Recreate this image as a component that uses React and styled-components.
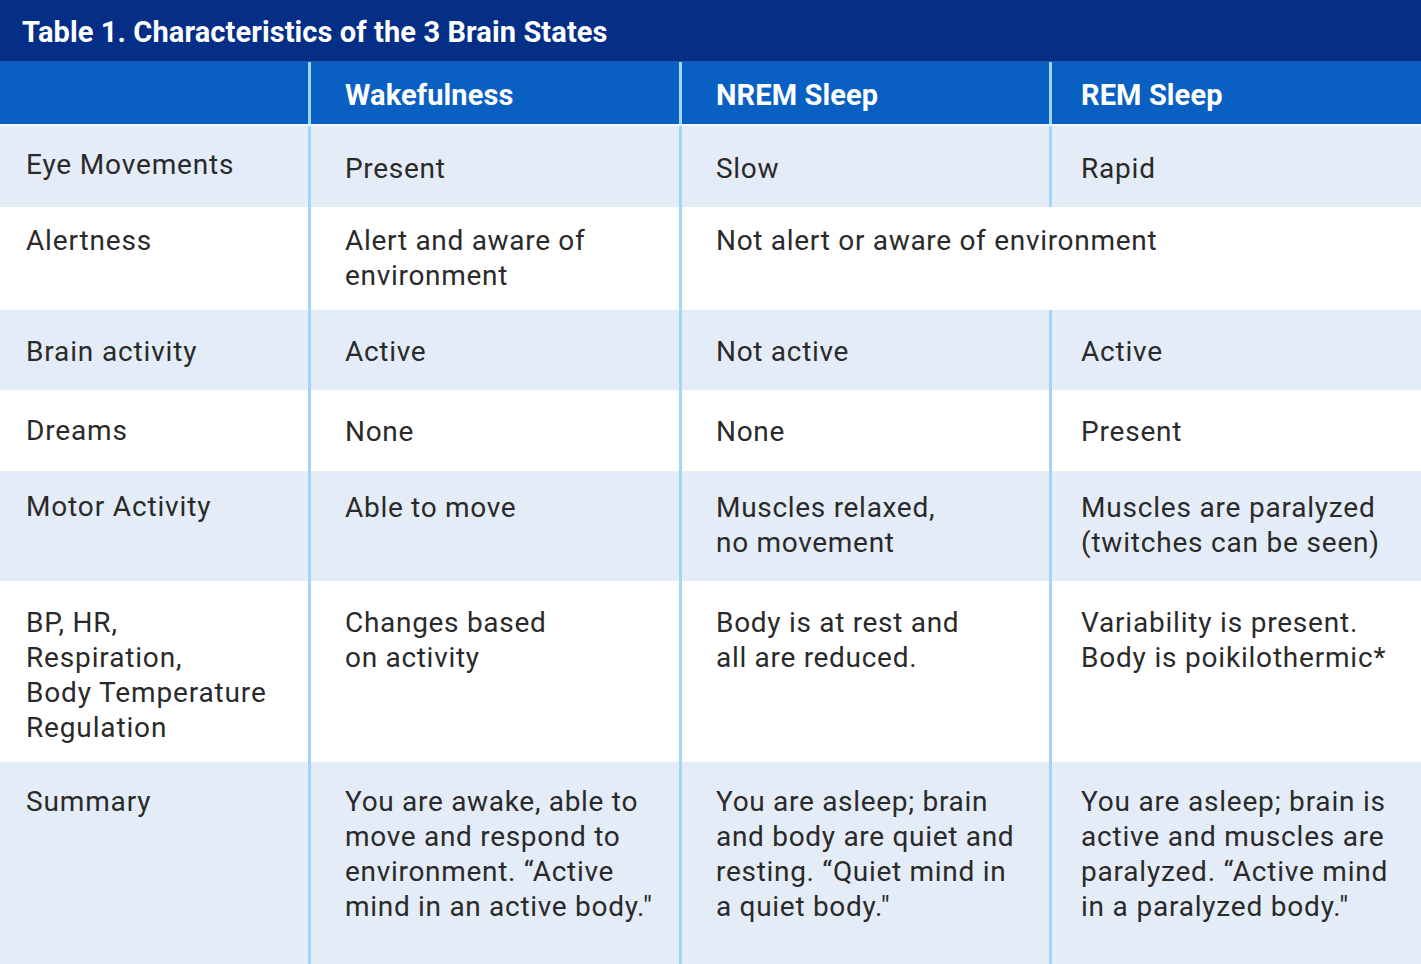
import React from 'react';
import styled, { createGlobalStyle } from 'styled-components';

const GlobalStyle = createGlobalStyle`
  html, body {
    margin: 0;
    padding: 0;
    background: #ffffff;
  }
  body {
    font-family: Roboto, "Noto Sans", "Liberation Sans", sans-serif;
  }
`;

// pad = label top padding, cellPad = value cells top padding
const rows = [
  { label: 'Eye Movements', h: 81, pad: 21, cellPad: 25, shade: true, cells: ['Present', 'Slow', 'Rapid'] },
  { label: 'Alertness', h: 103, pad: 16, shade: false, cells: ['Alert and aware of\nenvironment', 'Not alert or aware of environment'], merged: true },
  { label: 'Brain activity', h: 80, pad: 24, shade: true, cells: ['Active', 'Not active', 'Active'] },
  { label: 'Dreams', h: 81, pad: 23, cellPad: 24, shade: false, cells: ['None', 'None', 'Present'] },
  { label: 'Motor Activity', h: 110, pad: 18, cellPad: 19, shade: true, cells: ['Able to move', 'Muscles relaxed,\nno movement', 'Muscles are paralyzed\n(twitches can be seen)'] },
  {
    label: 'BP, HR,\nRespiration,\nBody Temperature\nRegulation',
    h: 181,
    pad: 24,
    shade: false,
    cells: ['Changes based\non activity', 'Body is at rest and\nall are reduced.', 'Variability is present.\nBody is poikilothermic*'],
  },
  {
    label: 'Summary',
    h: 202,
    pad: 22,
    shade: true,
    cells: [
      'You are awake, able to\nmove and respond to\nenvironment. \u201cActive\nmind in an active body."',
      'You are asleep; brain\nand body are quiet and\nresting. \u201cQuiet mind in\na quiet body."',
      'You are asleep; brain is\nactive and muscles are\nparalyzed. \u201cActive mind\nin a paralyzed body."',
    ],
  },
];

const App = () => {
  return (
    <>
      <GlobalStyle />
      <Table>
        <TitleBar>Table 1. Characteristics of the 3 Brain States</TitleBar>
        <HeaderRow>
          <HeadCell />
          <HeadCell $divider>Wakefulness</HeadCell>
          <HeadCell $divider>NREM Sleep</HeadCell>
          <HeadCell $divider $last>REM Sleep</HeadCell>
        </HeaderRow>
        {rows.map((row) => {
          const cp = row.cellPad ?? row.pad;
          return (
            <Row key={row.label} $h={row.h} $shade={row.shade}>
              <LabelCell $pad={row.pad}>{row.label}</LabelCell>
              <Cell $divider $pad={cp}>{row.cells[0]}</Cell>
              {row.merged ? (
                <Cell $divider $span $pad={cp}>{row.cells[1]}</Cell>
              ) : (
                <>
                  <Cell $divider $pad={cp}>{row.cells[1]}</Cell>
                  <Cell $divider $last $pad={cp}>{row.cells[2]}</Cell>
                </>
              )}
            </Row>
          );
        })}
      </Table>
    </>
  );
};

const Table = styled.div`
  width: 1421px;
  display: flex;
  flex-direction: column;
  color: #2a2a2a;
`;

const TitleBar = styled.div`
  height: 62px;
  box-sizing: border-box;
  background: #052f86;
  color: #ffffff;
  font-weight: 700;
  font-size: 29px;
  letter-spacing: 0.1px;
  padding: 15px 0 0 22px;
  border-bottom: 1px solid #1f57b0;
`;

const grid = `
  display: grid;
  grid-template-columns: 308px 371px 370px 1fr;
`;

const HeaderRow = styled.div`
  ${grid}
  height: 64px;
  box-sizing: border-box;
  background: #0a5fc3;
  border-bottom: 2px solid #f3f8fd;
`;

const HeadCell = styled.div`
  box-sizing: border-box;
  color: #ffffff;
  font-weight: 700;
  font-size: 29px;
  letter-spacing: 0.1px;
  padding: 16px 0 0 ${(p) => (p.$last ? 29 : 34)}px;
  border-left: ${(p) => (p.$divider ? '3px solid #a3d5f4' : 'none')};
`;

const Row = styled.div`
  ${grid}
  height: ${(p) => p.$h}px;
  background: ${(p) => (p.$shade ? '#e4ecf7' : '#ffffff')};
`;

const LabelCell = styled.div`
  box-sizing: border-box;
  font-size: 28px;
  line-height: 35px;
  letter-spacing: 0.85px;
  white-space: pre-line;
  padding: ${(p) => p.$pad}px 0 0 26px;
`;

const Cell = styled.div`
  box-sizing: border-box;
  font-size: 28px;
  line-height: 35px;
  letter-spacing: ${(p) => (p.$last ? '0.8px' : '0.7px')};
  white-space: pre-line;
  padding: ${(p) => p.$pad}px 0 0 ${(p) => (p.$last ? 29 : 34)}px;
  border-left: ${(p) => (p.$divider ? '3px solid #a3d5f4' : 'none')};
  grid-column: ${(p) => (p.$span ? 'span 2' : 'auto')};
`;

export default App;
